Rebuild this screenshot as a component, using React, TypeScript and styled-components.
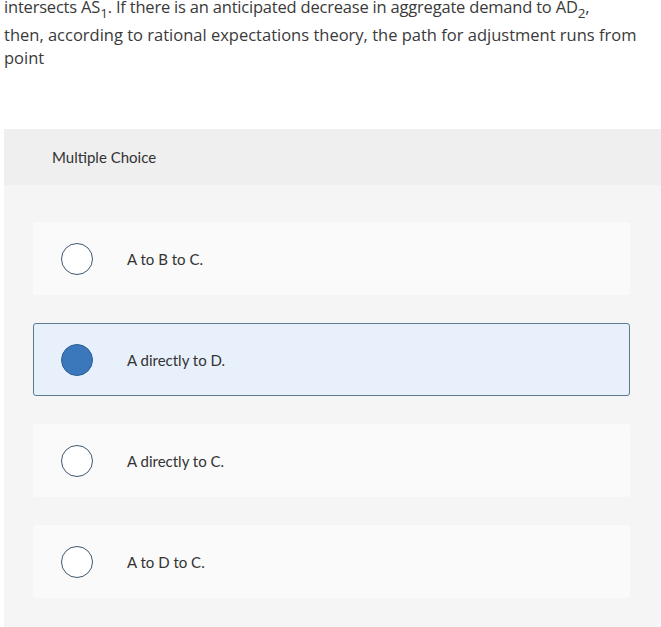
import React from "react";
import styled, { createGlobalStyle } from "styled-components";

const Global = createGlobalStyle`
  html, body { margin: 0; padding: 0; background: #ffffff; }
  body { font-family: Lato, "Open Sans", sans-serif; color: #333333; overflow: hidden; }
`;

const Page = styled.div`
  padding-left: 4px;
  width: 657px;
  height: 627px;
  overflow: hidden;
`;

const Question = styled.p`
  margin: -5px 0 0 0;
  font-family: "Open Sans", sans-serif;
  font-size: 16.5px;
  line-height: 23px;
  color: #3a3a3a;
  sub { font-size: 13.5px; vertical-align: -5px; line-height: 0; }
`;

const Line = styled.span<{ $tall?: boolean }>`
  display: block;
  white-space: nowrap;
  padding-bottom: ${(p) => (p.$tall ? 5 : 0)}px;
  letter-spacing: ${(p) => (p.$tall ? -0.2 : 0)}px;
`;

const Panel = styled.section`
  margin-top: 60px;
  background: #f5f5f5;
  display: flex;
  flex-direction: column;
`;

const Header = styled.div`
  height: 56px;
  background: #efefef;
  display: flex;
  align-items: center;
  padding-left: 48px;
  font-size: 15px;
  color: #333333;
`;

const Options = styled.div`
  display: flex;
  flex-direction: column;
  gap: 28px;
  padding: 37px 31px 30px 29px;
`;

const Option = styled.label<{ $selected?: boolean }>`
  box-sizing: border-box;
  height: 73px;
  display: flex;
  align-items: center;
  padding-left: ${(p) => (p.$selected ? 27 : 28)}px;
  gap: 34px;
  border-radius: 3px;
  background: ${(p) => (p.$selected ? "#e8f1fb" : "#fafafa")};
  border: ${(p) => (p.$selected ? "1px solid #5b7a96" : "none")};
  font-size: 15px;
  color: #333333;
`;

const Radio = styled.span<{ $selected?: boolean }>`
  box-sizing: border-box;
  width: 32px;
  height: 32px;
  border-radius: 50%;
  flex: none;
  border: 1.5px solid ${(p) => (p.$selected ? "#2f5f95" : "#3f5870")};
  background: ${(p) => (p.$selected ? "#3b77bb" : "#ffffff")};
`;

const choices = ["A to B to C.", "A directly to D.", "A directly to C.", "A to D to C."];

export default function App() {
  return (
    <Page>
      <Global />
      <Question>
        <Line $tall>
          intersects AS<sub>1</sub>. If there is an anticipated decrease in aggregate demand to AD<sub>2</sub>,
        </Line>
        <Line>then, according to rational expectations theory, the path for adjustment runs from</Line>
        <Line>point</Line>
      </Question>
      <Panel>
        <Header>Multiple Choice</Header>
        <Options>
          {choices.map((c, i) => (
            <Option key={c} $selected={i === 1}>
              <Radio $selected={i === 1} />
              {c}
            </Option>
          ))}
        </Options>
      </Panel>
    </Page>
  );
}
